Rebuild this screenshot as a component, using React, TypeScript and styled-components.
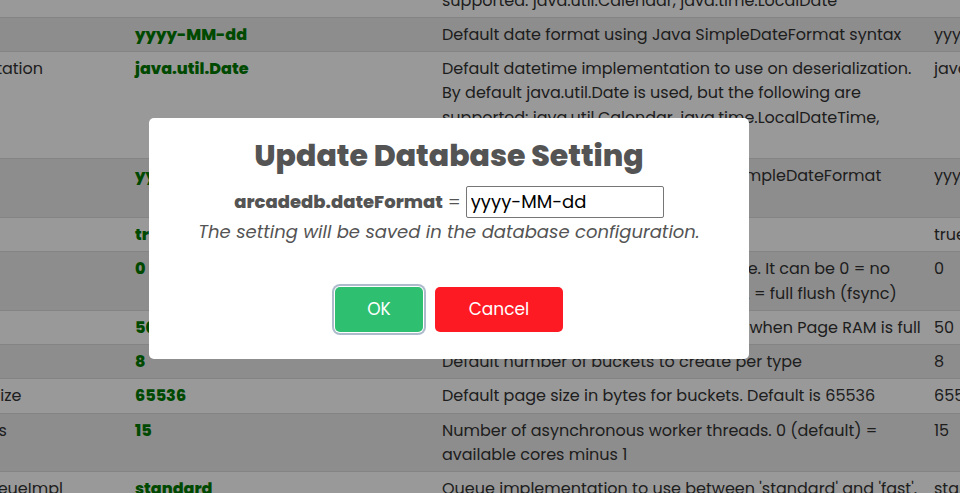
import React from 'react';
import styled, { createGlobalStyle } from 'styled-components';

const FONT = `'Poppins', 'Open Sans', 'Liberation Sans', sans-serif`;

const GlobalStyle = createGlobalStyle`
	html, body {
		margin: 0;
		height: 100%;
		overflow: hidden;
		background: #fff;
		font-family: ${FONT};
	}
`;

type Setting = {
	name: string;
	value: string;
	description: string[];
	current: string;
};

const settings: Setting[] = [
	{
		name: 'arcadedb.dateImplementation',
		value: 'java.util.Date',
		description: [
			'Default date implementation to use on deserialization.',
			'By default java.util.Date is used, but the following are',
			'supported: java.util.Calendar, java.time.LocalDate',
		],
		current: 'java.util.Date',
	},
	{
		name: 'arcadedb.dateFormat',
		value: 'yyyy-MM-dd',
		description: ['Default date format using Java SimpleDateFormat syntax'],
		current: 'yyyy-MM-dd',
	},
	{
		name: 'arcadedb.dateTimeImplementation',
		value: 'java.util.Date',
		description: [
			'Default datetime implementation to use on deserialization.',
			'By default java.util.Date is used, but the following are',
			'supported: java.util.Calendar, java.time.LocalDateTime,',
			'java.time.ZonedDateTime',
		],
		current: 'java.util.Date',
	},
	{
		name: 'arcadedb.dateTimeFormat',
		value: 'yyyy-MM-dd HH:mm:ss',
		description: ['Default datetime format using Java SimpleDateFormat', 'syntax'],
		current: 'yyyy-MM-dd HH:mm:ss',
	},
	{
		name: 'arcadedb.txWAL',
		value: 'true',
		description: ['Uses the WAL'],
		current: 'true',
	},
	{
		name: 'arcadedb.txWalFlush',
		value: '0',
		description: [
			'Flushes the WAL on disk at commit time. It can be 0 = no',
			'flush, 1 = flush without metadata and 2 = full flush (fsync)',
		],
		current: '0',
	},
	{
		name: 'arcadedb.freePageRAM',
		value: '50',
		description: ['Percentage (0-100) of memory to free when Page RAM is full'],
		current: '50',
	},
	{
		name: 'arcadedb.typeDefaultBuckets',
		value: '8',
		description: ['Default number of buckets to create per type'],
		current: '8',
	},
	{
		name: 'arcadedb.bucketDefaultPageSize',
		value: '65536',
		description: ['Default page size in bytes for buckets. Default is 65536'],
		current: '65536',
	},
	{
		name: 'arcadedb.asyncWorkerThreads',
		value: '15',
		description: [
			'Number of asynchronous worker threads. 0 (default) =',
			'available cores minus 1',
		],
		current: '15',
	},
	{
		name: 'arcadedb.asyncOperationsQueueImpl',
		value: 'standard',
		description: [
			"Queue implementation to use between 'standard' and 'fast'.",
			"'standard' consumes less CPU than the 'fast' implementation,",
			'but it could be slower with high loads',
		],
		current: 'standard',
	},
];

const TableWrap = styled.div`
	margin: -66px 0 0 -253px;
`;

const Table = styled.table`
	border-collapse: collapse;
	table-layout: fixed;
	width: 1450px;
	font-size: 16px;
	color: #333;
`;

const Row = styled.tr<{ $striped: boolean }>`
	background: ${(p) => (p.$striped ? '#ebebeb' : '#ffffff')};
	border-top: 1px solid #dcdcdc;
`;

const Cell = styled.td`
	padding: 5px 8px 4px;
	line-height: 24.3px;
	vertical-align: top;
	white-space: nowrap;
	overflow: hidden;
`;

const ValueCell = styled(Cell)`
	font-weight: 800;
	color: #007a00;
`;

const Line = styled.div`
	white-space: nowrap;
`;

const Overlay = styled.div`
	position: fixed;
	inset: 0;
	background: rgba(0, 0, 0, 0.4);
	display: flex;
	align-items: center;
	justify-content: center;
	padding: 0 62px 17px 0;
`;

const Modal = styled.div`
	width: 600px;
	box-sizing: border-box;
	background: #fff;
	border-radius: 5px;
	padding: 20px 16px 27px;
	text-align: center;
	color: #545454;
`;

const Title = styled.h2`
	margin: 0;
	font-size: 30px;
	line-height: 36px;
	font-weight: 800;
	color: #545454;
`;

const Field = styled.div`
	display: flex;
	align-items: center;
	justify-content: center;
	gap: 5px;
	margin-top: 12px;
	font-size: 18px;
`;

const FieldName = styled.b`
	font-weight: 800;
`;

const FieldInput = styled.input`
	width: 198px;
	height: 32px;
	box-sizing: border-box;
	border: 1px solid #767676;
	border-radius: 2px;
	padding: 0 4px;
	font-family: ${FONT};
	font-size: 18px;
	color: #000;
	outline: none;
`;

const Note = styled.div`
	font-size: 18px;
	line-height: 27px;
	font-style: italic;
`;

const Actions = styled.div`
	display: flex;
	justify-content: center;
	gap: 12px;
	margin-top: 42px;
`;

const Button = styled.button<{ $variant: 'confirm' | 'cancel' }>`
	height: 45px;
	width: ${(p) => (p.$variant === 'confirm' ? '88px' : '128px')};
	border: none;
	border-radius: 5px;
	background: ${(p) => (p.$variant === 'confirm' ? '#2fbf71' : '#fe1a22')};
	color: #fff;
	font-family: ${FONT};
	font-size: 17px;
	cursor: pointer;
	box-shadow: ${(p) =>
		p.$variant === 'confirm' ? '0 0 0 1px #fff, 0 0 0 3px #aebbcc' : 'none'};
`;

export default function App(): JSX.Element {
	return (
		<>
			<GlobalStyle />
			<TableWrap>
				<Table>
					<colgroup>
						<col style={{ width: 380 }} />
						<col style={{ width: 307 }} />
						<col style={{ width: 492 }} />
						<col />
					</colgroup>
					<tbody>
						{settings.map((s, i) => (
							<Row key={s.name} $striped={i % 2 === 1}>
								<Cell>{s.name}</Cell>
								<ValueCell>{s.value}</ValueCell>
								<Cell>
									{s.description.map((line) => (
										<Line key={line}>{line}</Line>
									))}
								</Cell>
								<Cell>{s.current}</Cell>
							</Row>
						))}
					</tbody>
				</Table>
			</TableWrap>

			<Overlay>
				<Modal>
					<Title>Update Database Setting</Title>
					<Field>
						<FieldName>arcadedb.dateFormat</FieldName>
						<span>=</span>
						<FieldInput defaultValue="yyyy-MM-dd" />
					</Field>
					<Note>The setting will be saved in the database configuration.</Note>
					<Actions>
						<Button $variant="confirm">OK</Button>
						<Button $variant="cancel">Cancel</Button>
					</Actions>
				</Modal>
			</Overlay>
		</>
	);
}
